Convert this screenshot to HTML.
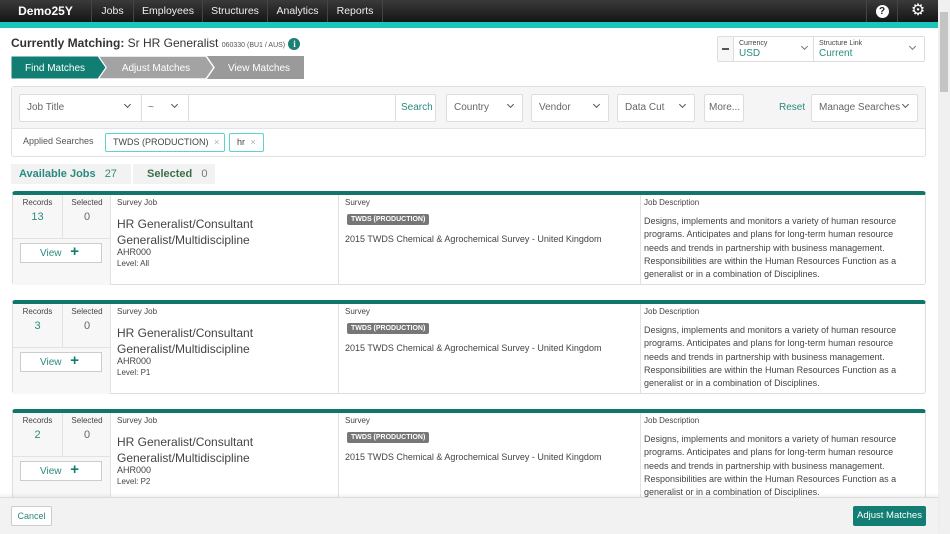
<!DOCTYPE html>
<html><head><meta charset="utf-8"><style>
*{box-sizing:border-box;margin:0;padding:0}
body{width:950px;height:534px;overflow:hidden;font-family:"Liberation Sans",Arial,sans-serif;background:#fff;position:relative;color:#333}
.a{position:absolute}
.nav{left:0;top:0;width:938px;height:22px;background:linear-gradient(#3a3a3a,#151515)}
.nav span{position:absolute;top:0;height:22px;line-height:22px;color:#eee;font-size:10.5px;text-align:center;border-right:1px solid #444}
.band{left:0;top:22px;width:938px;height:6px;background:#1bc5b9}
.sb{left:938px;top:0;width:12px;height:534px;background:#f0f0f0}
.box{border:1px solid #ddd;background:#fff;border-radius:2px}
.sel{font-size:10px;color:#666}
.chev{position:absolute;width:5px;height:5px;border-right:1.5px solid #555;border-bottom:1.5px solid #555;transform:rotate(45deg)}
.t{color:#2a8a80}
.card{position:absolute;left:12px;width:914px;height:94px;border:1px solid #ddd;border-top:4px solid #10766c;border-radius:3px;background:#fff}
.card .c{position:absolute;top:0;height:90px;border-right:1px solid #e2e2e2}
.lab{font-size:8px;color:#444}
.tag{display:inline-block;background:#777;color:#fff;font-size:7px;font-weight:bold;padding:2px 4px;border-radius:2px}
</style></head><body>
<div class="a nav">
<span style="left:0;width:92px;font-weight:bold;font-size:12px;color:#fff">Demo25Y</span>
<span style="left:92px;width:42px">Jobs</span>
<span style="left:134px;width:69px">Employees</span>
<span style="left:203px;width:65px">Structures</span>
<span style="left:268px;width:60px">Analytics</span>
<span style="left:328px;width:55px">Reports</span>
<span style="left:866px;width:32px;border-left:1px solid #444"><b style="display:inline-block;width:13px;height:13px;border-radius:50%;background:#fff;color:#222;font-size:10px;line-height:13px;margin-top:4px">?</b></span>
<span style="left:898px;width:40px;font-size:16px;color:#fff;border:none">⚙</span>
</div>
<div class="a band"></div>
<div class="a sb"><div class="a" style="left:2px;top:12px;width:8px;height:80px;background:#c4c4c4"></div></div>

<div class="a" style="left:11px;top:36px;font-size:12px;white-space:nowrap"><b>Currently Matching:</b> Sr HR Generalist <span style="font-size:7px;color:#555">060330 (BU1 / AUS)</span> <span style="display:inline-block;width:12px;height:12px;border-radius:50%;background:#1a7f74;color:#fff;font-size:9px;font-weight:bold;text-align:center;line-height:12px;font-family:'Liberation Serif',serif">i</span></div>

<svg class="a" style="left:11px;top:56px" width="293" height="23">
<polygon points="195,0 293,0 293,23 195,23 203,11.5" fill="#9a9a9a"/>
<polygon points="87,0 195,0 203,11.5 195,23 87,23 95,11.5" fill="#a3a3a3" stroke="#fff" stroke-width="1.5"/>
<polygon points="0,0 87,0 95,11.5 87,23 0,23" fill="#127d72" stroke="#fff" stroke-width="1"/>
<text x="44" y="15" font-size="10" fill="#fff" text-anchor="middle" font-family="Liberation Sans">Find Matches</text>
<text x="145" y="15" font-size="10" fill="#fff" text-anchor="middle" font-family="Liberation Sans">Adjust Matches</text>
<text x="248" y="15" font-size="10" fill="#fff" text-anchor="middle" font-family="Liberation Sans">View Matches</text>
</svg>

<div class="a box" style="left:717px;top:36px;width:208px;height:26px;background:#f7f7f7"></div>
<div class="a" style="left:722px;top:48px;width:7px;height:2px;background:#555"></div>
<div class="a" style="left:733px;top:37px;width:80px;height:24px;background:#fff;border-left:1px solid #ddd"><div class="a lab" style="left:5px;top:3px;font-size:7px">Currency</div><div class="a t" style="left:5px;top:11px;font-size:10px">USD</div><i class="chev" style="left:68px;top:7px;border-color:#777"></i></div>
<div class="a" style="left:813px;top:37px;width:111px;height:24px;background:#fff;border-left:1px solid #ddd"><div class="a lab" style="left:5px;top:3px;font-size:7px">Structure Link</div><div class="a t" style="left:5px;top:11px;font-size:10px">Current</div><i class="chev" style="left:96px;top:7px;border-color:#777"></i></div>

<div class="a" style="left:11px;top:86px;width:915px;height:71px;border:1px solid #e0e0e0;border-radius:3px;background:#fff"></div>
<div class="a" style="left:12px;top:87px;width:913px;height:42px;background:#f5f5f5;border-bottom:1px solid #e3e3e3"></div>
<div class="a box" style="left:19px;top:94px;width:417px;height:28px"></div>
<div class="a sel" style="left:27px;top:102px">Job Title</div><i class="chev" style="left:125px;top:102px"></i>
<div class="a" style="left:141px;top:95px;width:1px;height:26px;background:#ddd"></div>
<div class="a sel" style="left:148px;top:102px">~</div><i class="chev" style="left:172px;top:102px"></i>
<div class="a" style="left:188px;top:95px;width:1px;height:26px;background:#ddd"></div>
<div class="a" style="left:395px;top:95px;width:1px;height:26px;background:#ddd"></div>
<div class="a sel" style="left:401px;top:102px;color:#2a8a80">Search</div>
<div class="a box" style="left:446px;top:94px;width:77px;height:28px"></div><div class="a sel" style="left:454px;top:102px">Country</div><i class="chev" style="left:508px;top:102px"></i>
<div class="a box" style="left:531px;top:94px;width:78px;height:28px"></div><div class="a sel" style="left:539px;top:102px">Vendor</div><i class="chev" style="left:594px;top:102px"></i>
<div class="a box" style="left:617px;top:94px;width:78px;height:28px"></div><div class="a sel" style="left:625px;top:102px">Data Cut</div><i class="chev" style="left:680px;top:102px"></i>
<div class="a box" style="left:704px;top:94px;width:40px;height:28px"></div><div class="a sel" style="left:709px;top:102px">More...</div>
<div class="a sel" style="left:779px;top:102px;color:#2a8a80">Reset</div>
<div class="a box" style="left:811px;top:94px;width:107px;height:28px"></div><div class="a sel" style="left:819px;top:102px">Manage Searches</div><i class="chev" style="left:903px;top:102px"></i>
<div class="a sel" style="left:23px;top:136px;color:#555;font-size:9px">Applied Searches</div>
<div class="a" style="left:105px;top:133px;width:120px;height:19px;border:1px solid #5fd3ca;border-radius:2px;font-size:9px;color:#444;line-height:17px;padding-left:7px">TWDS (PRODUCTION) <span style="color:#aaa;margin-left:3px">×</span></div>
<div class="a" style="left:229px;top:133px;width:35px;height:19px;border:1px solid #5fd3ca;border-radius:2px;font-size:9px;color:#444;line-height:17px;padding-left:7px">hr <span style="color:#aaa;margin-left:3px">×</span></div>

<div class="a" style="left:11px;top:164px;width:120px;height:20px;background:#f2f2f2;font-size:11px;line-height:20px;padding-left:8px"><b class="t">Available Jobs</b> <span class="t" style="margin-left:6px">27</span></div>
<div class="a" style="left:133px;top:164px;width:82px;height:20px;background:#f2f2f2;font-size:11px;line-height:20px;padding-left:14px"><b style="color:#3e6d4a">Selected</b> <span style="margin-left:6px;color:#777">0</span></div>

<div id="cards"></div>
<script>
var lv=["All","P1","P2"],rc=["13","3","2"],tops=[191,300,409],h="";
for(var i=0;i<3;i++){h+='<div class="card" style="top:'+tops[i]+'px">'+
'<div class="c" style="left:0;width:98px;background:#f7f7f7"></div>'+
'<div class="a" style="left:0;top:0;width:50px;height:44px;border-right:1px solid #e2e2e2;border-bottom:1px solid #e2e2e2;text-align:center"><div class="lab" style="margin-top:3px">Records</div><div class="t" style="font-size:11px;margin-top:4px">'+rc[i]+'</div></div>'+
'<div class="a" style="left:50px;top:0;width:48px;height:44px;border-bottom:1px solid #e2e2e2;text-align:center"><div class="lab" style="margin-top:3px">Selected</div><div style="font-size:11px;margin-top:4px;color:#666">0</div></div>'+
'<div class="a" style="left:7px;top:48px;width:82px;height:20px;border:1px solid #ccc;background:#fff;font-size:10px;color:#2a8a80;line-height:18px;padding-left:19px">View <b style="color:#127d72;font-size:15px;margin-left:6px;line-height:15px">+</b></div>'+
'<div class="c" style="left:98px;width:228px"><div class="lab" style="position:absolute;left:6px;top:3px">Survey Job</div><div style="position:absolute;left:6px;top:21px;font-size:12px;line-height:16px;color:#444">HR Generalist/Consultant<br>Generalist/Multidiscipline</div><div style="position:absolute;left:6px;top:52px;font-size:9px;color:#444">AHR000</div><div style="position:absolute;left:6px;top:64px;font-size:8px;color:#444">Level: '+lv[i]+'</div></div>'+
'<div class="c" style="left:326px;width:302px"><div class="lab" style="position:absolute;left:6px;top:3px">Survey</div><div style="position:absolute;left:8px;top:13px"><span class="tag">TWDS (PRODUCTION)</span></div><div style="position:absolute;left:6px;top:39px;font-size:9px;color:#444;white-space:nowrap">2015 TWDS Chemical &amp; Agrochemical Survey - United Kingdom</div></div>'+
'<div class="c" style="left:628px;width:284px;border:none"><div class="lab" style="position:absolute;left:3px;top:3px">Job Description</div><div style="position:absolute;left:3px;top:20px;width:262px;font-size:9px;line-height:13.3px;color:#444">Designs, implements and monitors a variety of human resource programs. Anticipates and plans for long-term human resource needs and trends in partnership with business management. Responsibilities are within the Human Resources Function as a generalist or in a combination of Disciplines.</div></div>'+
'</div>';}
document.getElementById("cards").innerHTML=h;
</script>

<div class="a" style="left:0;top:497px;width:938px;height:37px;background:#f2f2f2;border-top:1px solid #ddd;box-shadow:0 -2px 3px rgba(0,0,0,.06)"></div>
<div class="a" style="left:11px;top:506px;width:41px;height:20px;border:1px solid #ccc;background:#fff;border-radius:2px;font-size:9px;color:#2a8a80;text-align:center;line-height:18px">Cancel</div>
<div class="a" style="left:853px;top:506px;width:73px;height:20px;background:#127d72;border-radius:2px;font-size:9.5px;color:#fff;text-align:center;line-height:20px">Adjust Matches</div>
</body></html>
